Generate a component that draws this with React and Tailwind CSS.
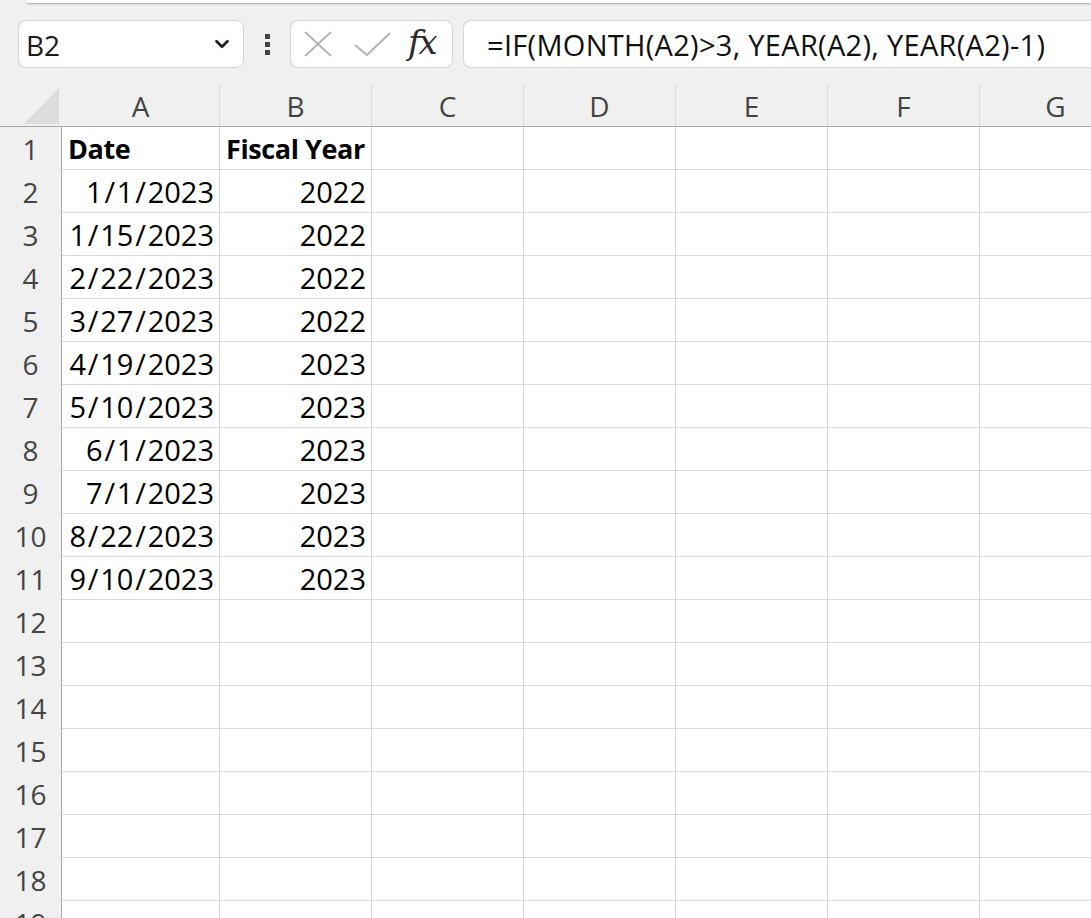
import { ChevronDown } from 'lucide-react';

const columns = [
  { key: 'A', width: 'w-[158px]' },
  { key: 'B', width: 'w-[152px]' },
  { key: 'C', width: 'w-[152px]' },
  { key: 'D', width: 'w-[152px]' },
  { key: 'E', width: 'w-[152px]' },
  { key: 'F', width: 'w-[152px]' },
  { key: 'G', width: 'w-[152px]' },
];

const rows = [
  ['1/1/2023', '2022'],
  ['1/15/2023', '2022'],
  ['2/22/2023', '2022'],
  ['3/27/2023', '2022'],
  ['4/19/2023', '2023'],
  ['5/10/2023', '2023'],
  ['6/1/2023', '2023'],
  ['7/1/2023', '2023'],
  ['8/22/2023', '2023'],
  ['9/10/2023', '2023'],
];

const cellFont = "font-['Open_Sans',sans-serif]";

// slashes in the sheet font are wider than Open Sans, pad them a bit
function DateText({ value }) {
  const parts = value.split('/');
  return (
    <span>
      {parts.map((p, i) => (
        <span key={i}>
          {i > 0 && <span className="mx-[1.8px]">/</span>}
          {p}
        </span>
      ))}
    </span>
  );
}

function RowHeader({ n }) {
  return (
    <div className="w-[61px] shrink-0 flex flex-col bg-[#f0f0f0]">
      <div className="flex-1 flex items-center justify-center pt-[1px] text-[28px] text-[#444]">{n}</div>
      <div className="h-px bg-gradient-to-r from-[#f0f0f0] to-[#d6d6d6]" />
    </div>
  );
}

function Cell({ width, children, align = 'left', bold = false }) {
  return (
    <div
      className={`${width} shrink-0 h-full flex items-center pt-[2px] border-r border-b border-[#dadada] bg-white text-black ${
        align === 'right' ? 'justify-end pr-[5px]' : 'justify-start pl-[6px]'
      } ${bold ? 'font-bold text-[27px] tracking-[-0.4px]' : 'text-[29px]'}`}
    >
      {children}
    </div>
  );
}

function Row({ n, values }) {
  return (
    <div className="flex h-[43px] shrink-0">
      <RowHeader n={n} />
      <div className="w-px shrink-0 bg-[#a9a9a9]" />
      {columns.map((c, i) => {
        const v = values ? values[i] : null;
        if (n === 1 && i < 2) {
          return (
            <Cell key={c.key} width={c.width} bold>
              {v}
            </Cell>
          );
        }
        return (
          <Cell key={c.key} width={c.width} align="right">
            {v && i === 0 ? <DateText value={v} /> : v}
          </Cell>
        );
      })}
    </div>
  );
}

export default function App() {
  return (
    <div className={`w-[1091px] h-[918px] overflow-hidden bg-[#f0f0f0] flex flex-col ${cellFont}`}>
      {/* ribbon edge */}
      <div className="ml-[27px] h-[3px] bg-white shadow-[0_1px_2px_rgba(0,0,0,0.3)] shrink-0" />

      {/* formula bar */}
      <div className="flex items-center h-[48px] mt-[17px] pl-[18px] shrink-0">
        <div className="w-[226px] h-full bg-white border border-[#d4d4d4] rounded-[8px] flex items-center pl-[7px] pr-[10px]">
          <span className="flex-1 text-[28px] text-[#1a1a1a] pt-[2px]">B2</span>
          <ChevronDown className="w-[22px] h-[22px] text-[#222]" strokeWidth={3} />
        </div>
        <div className="w-[46px] flex flex-col items-center gap-[3px]">
          <div className="w-[5px] h-[5px] bg-[#444]" />
          <div className="w-[5px] h-[5px] bg-[#444]" />
          <div className="w-[5px] h-[5px] bg-[#444]" />
        </div>
        <div className="w-[163px] h-full bg-white border border-[#d4d4d4] rounded-[8px] flex items-center pl-[13px]">
          <svg width="28" height="26" viewBox="0 0 28 26" className="shrink-0">
            <path d="M1 1 L27 25 M27 1 L1 25" stroke="#b3b3b3" strokeWidth="2" fill="none" />
          </svg>
          <svg width="37" height="24" viewBox="0 0 37 24" className="shrink-0 ml-[22px]">
            <path d="M1 13 L13 23 L36 1" stroke="#b3b3b3" strokeWidth="2" fill="none" />
          </svg>
          <span className="ml-[17px] font-['DejaVu_Serif',serif] italic text-[34px] leading-none text-[#2b2b2b] -mt-[4px] tracking-[-2px]">
            fx
          </span>
        </div>
        <div className="ml-[10px] flex-1 h-full bg-white border border-[#d4d4d4] border-r-0 rounded-l-[8px] flex items-center pl-[23px]">
          <span className="text-[29px] tracking-[0.3px] text-[#111] pt-[2px] whitespace-nowrap">
            =IF(MONTH(A2)&gt;3, YEAR(A2), YEAR(A2)-1)
          </span>
        </div>
      </div>

      {/* column headers */}
      <div className="flex h-[43px] mt-[16px] shrink-0 border-b border-[#a9a9a9]">
        <div className="w-[62px] shrink-0 flex items-end justify-end pr-[3px] pb-[2px]">
          <svg width="35" height="36" viewBox="0 0 35 36">
            <polygon points="35,0 35,36 0,36" fill="#dcdcdc" />
          </svg>
        </div>
        {columns.map((c) => (
          <div
            key={c.key}
            className={`${c.width} shrink-0 flex items-center justify-center pt-[2px] border-r border-[#dcdcdc] text-[28px] text-[#444]`}
          >
            {c.key}
          </div>
        ))}
      </div>

      {/* grid */}
      <div className="flex flex-col">
        <Row n={1} values={['Date', 'Fiscal Year']} />
        {rows.map((r, i) => (
          <Row key={i} n={i + 2} values={r} />
        ))}
        {[12, 13, 14, 15, 16, 17, 18, 19].map((n) => (
          <Row key={n} n={n} />
        ))}
      </div>
    </div>
  );
}
